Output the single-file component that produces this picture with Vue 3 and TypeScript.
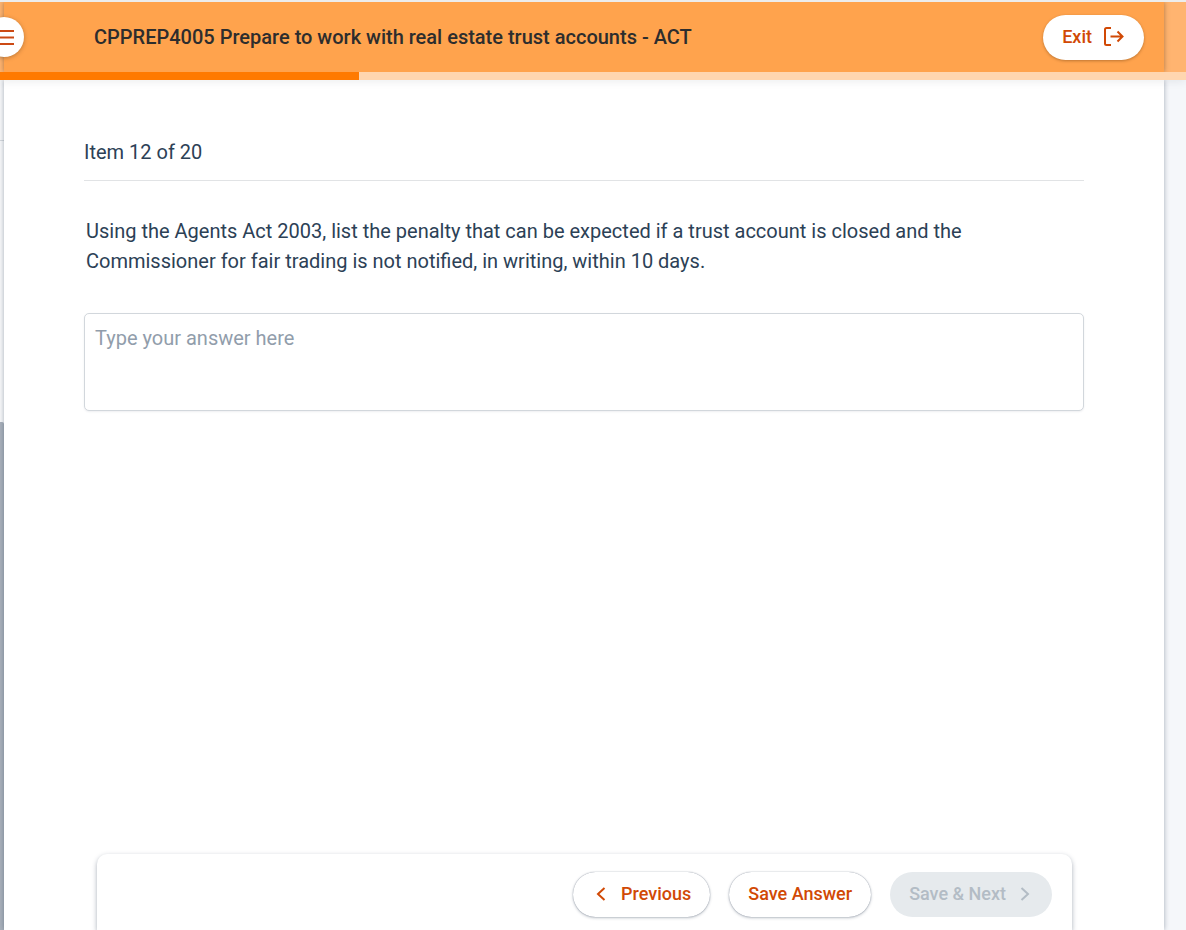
<script setup lang="ts">
import { computed, ref } from 'vue'

const title = 'CPPREP4005 Prepare to work with real estate trust accounts - ACT'
const item = ref(12)
const total = 20
const answer = ref('')
const progress = ref(30.3)
const fill = computed(() => ({ width: `${progress.value}%` }))
const canContinue = computed(() => answer.value.trim().length > 0)
</script>

<template>
  <div class="page">
    <header class="top">
      <div class="top-row">
        <button class="menu" type="button" aria-label="Menu">
          <svg width="20" height="16" viewBox="0 0 20 16" fill="none" stroke="currentColor" stroke-width="2">
            <path d="M0 2h20M0 8.500h20M0 15h20" />
          </svg>
        </button>
        <div class="bar">
          <h1>{{ title }}</h1>
          <button class="pill exit" type="button">
            Exit
            <svg width="22" height="20" viewBox="0 0 22 20" fill="none" stroke="currentColor" stroke-width="2">
              <path d="M8 1H3.500Q2 1 2 2.500V16.500Q2 18 3.500 18H8" />
              <path d="M7.500 9.500H20M14.500 4.500l5 5-5 5" />
            </svg>
          </button>
        </div>
      </div>
      <div class="track" role="progressbar" :aria-valuenow="progress" aria-valuemin="0" aria-valuemax="100" aria-label="Progress">
        <div class="fill" :style="fill"></div>
      </div>
    </header>

    <div class="body">
      <div class="rail"><div class="thumb"></div></div>
      <main class="sheet">
        <p class="count">Item {{ item }} of {{ total }}</p>
        <label class="question" for="answer">
          Using the Agents Act 2003, list the penalty that can be expected if a trust account is closed and the
          Commissioner for fair trading is not notified, in writing, within 10 days.
        </label>
        <textarea id="answer" v-model="answer" placeholder="Type your answer here"></textarea>
        <footer class="actions">
          <button class="pill outlined" type="button">
            <svg class="prev-icon" width="10" height="14" viewBox="0 0 10 14" fill="none" stroke="currentColor" stroke-width="2">
              <path d="M8.500 1L2 7l6.500 6" />
            </svg>
            Previous
          </button>
          <button class="pill outlined" type="button">Save Answer</button>
          <button class="pill next" type="button" :disabled="!canContinue">
            Save &amp; Next
            <svg class="next-icon" width="10" height="14" viewBox="0 0 10 14" fill="none" stroke="currentColor" stroke-width="2">
              <path d="M1.500 1L8 7l-6.500 6" />
            </svg>
          </button>
        </footer>
      </main>
    </div>
  </div>
</template>

<style>
body {
  background: #f5f7fa;
}
</style>

<style scoped>
.page {
  display: flex;
  flex-direction: column;
  box-sizing: border-box;
  min-height: 100vh;
  overflow: hidden;
  font-family: Roboto, "Liberation Sans", sans-serif;
  color: #2c4156;
}
.top {
  position: relative;
  z-index: 1;
  border-top: 2px solid #ededed;
  box-shadow: 0 2px 8px rgba(40, 50, 60, 0.08);
}
.top-row {
  position: relative;
  padding: 0 22px 0 4px;
  background: #ffb470;
  overflow: hidden;
}
.bar {
  display: flex;
  align-items: center;
  justify-content: space-between;
  box-sizing: border-box;
  height: 70px;
  padding: 1px 20px 0 90px;
  background: #ffa34d;
  box-shadow: 0 0 5px rgba(90, 60, 30, 0.5);
}
h1 {
  margin: 0;
  padding-bottom: 1px;
  font-size: 20px;
  line-height: 30px;
  font-weight: 500;
  color: #2d2d2d;
}
.menu {
  position: absolute;
  left: -16px;
  top: 15px;
  display: flex;
  align-items: center;
  justify-content: center;
  width: 40px;
  height: 40px;
  padding: 0;
  border: 0;
  border-radius: 50%;
  background: #fff;
  color: #cc4a14;
  box-shadow: 0 1px 4px rgba(60, 40, 20, 0.35);
}
.track {
  height: 8px;
  background: #ffd6b0;
}
.fill {
  height: 100%;
  background: #ff7a00;
}
.body {
  flex: 1;
  display: flex;
  padding-right: 22px;
}
.rail {
  display: flex;
  flex-direction: column;
  width: 4px;
  background: #f8f9fa;
}
.rail::before {
  content: "";
  height: 60px;
  border-bottom: 1px solid #d5d9dd;
}
.thumb {
  flex: 1;
  margin-top: 281px;
  background: #a9b1bb;
  border-radius: 0 2px 0 0;
}
.sheet {
  flex: 1;
  display: flex;
  flex-direction: column;
  min-width: 0;
  padding: 57px 80px 0;
  background: #fff;
  box-shadow: 0 0 5px rgba(40, 55, 80, 0.4);
}
.count {
  margin: 0 0 35px;
  padding-bottom: 13px;
  border-bottom: 1px solid #e1e3e5;
  font-size: 20px;
  line-height: 30px;
}
.question {
  max-width: 940px;
  padding: 0 2px;
  font-size: 20px;
  line-height: 30px;
}
textarea {
  box-sizing: border-box;
  width: 100%;
  height: 98px;
  margin: 37px 0 40px;
  padding: 9px 10px;
  border: 1px solid #d2d7dc;
  border-radius: 5px;
  resize: none;
  background: #fff;
  color: inherit;
  font: inherit;
  font-size: 20px;
  line-height: 30px;
  box-shadow: 0 1px 2px rgba(40, 55, 80, 0.08);
}
textarea::placeholder {
  color: #919dab;
  opacity: 1;
}
.actions {
  display: flex;
  justify-content: flex-end;
  align-items: center;
  gap: 19px;
  box-sizing: border-box;
  height: 76px;
  margin: auto 12px 0 13px;
  padding: 5px 20px 0;
  border-radius: 10px 10px 0 0;
  background: #fff;
  box-shadow: 0 2px 5px rgba(40, 55, 80, 0.4);
}
.pill {
  display: flex;
  align-items: center;
  justify-content: center;
  box-sizing: border-box;
  height: 45px;
  padding: 0 19px 1px;
  border: 0;
  border-radius: 23px;
  background: #fff;
  color: #d14905;
  font-family: inherit;
  font-size: 18px;
  line-height: 24px;
  font-weight: 500;
}
.exit {
  gap: 11px;
  box-shadow: 0 1px 3px rgba(90, 50, 10, 0.4);
}
.outlined {
  box-shadow: 0 0 1px rgba(40, 55, 80, 0.6), 0 1px 3px rgba(40, 55, 80, 0.3);
}
.prev-icon {
  margin: 0 15px 0 4px;
}
.next {
  background: #e6eaed;
  color: #b3bcc5;
}
.next-icon {
  margin: 0 3px 0 14px;
}
</style>
